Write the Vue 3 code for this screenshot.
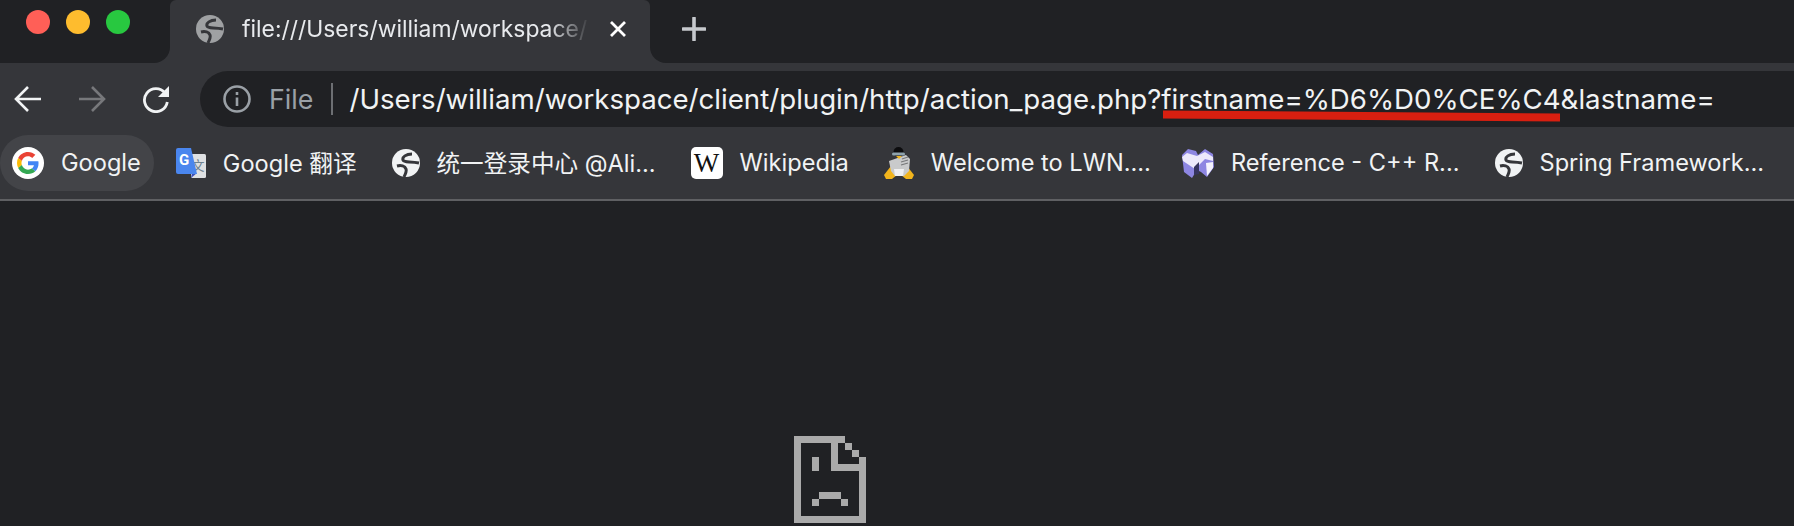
<template>
  <div class="browser">
    <div class="strip">
      <div class="lights">
        <span class="light red"></span>
        <span class="light amber"></span>
        <span class="light green"></span>
      </div>
      <div class="tab-slot">
        <div class="tab">
          <svg class="globe" viewBox="0 0 28 28">
            <circle cx="14" cy="14" r="14" fill="#9fa1a3" />
            <path d="M20 5C14 5 10 8 11 11C12 14 18 12 27 14M5 17C9 16 13 17 14 20C15 23 13 25 12 28" fill="none" stroke="#35363a" stroke-width="3" />
          </svg>
          <div class="tab-title">file:///Users/william/workspace/</div>
          <svg class="tab-close" viewBox="0 0 16 16">
            <path d="M1 1L15 15M15 1L1 15" stroke="#fff" stroke-width="2.800" />
          </svg>
        </div>
      </div>
      <div class="strip-rest">
        <svg class="new-tab" viewBox="0 0 24 24">
          <path d="M12 1V23M1 12H23" stroke="#c6c9cd" stroke-width="3.600" stroke-linecap="round" />
        </svg>
      </div>
    </div>

    <div class="toolbar">
      <svg class="nav" viewBox="0 0 28 28">
        <path d="M27 14H3M14 2L2 14L14 26" fill="none" stroke="#f1f3f4" stroke-width="2.600" />
      </svg>
      <svg class="nav" viewBox="0 0 28 28">
        <path d="M1 14H25M14 2L26 14L14 26" fill="none" stroke="#77787b" stroke-width="2.600" />
      </svg>
      <svg class="nav" viewBox="0 0 28 28">
        <path d="M23 8A11.500 11.500 0 1 0 25.300 17" fill="none" stroke="#f1f3f4" stroke-width="2.800" />
        <path d="M27 1V12H16Z" fill="#f1f3f4" />
      </svg>
      <div class="omnibox">
        <svg class="info" viewBox="0 0 28 28">
          <circle cx="14" cy="14" r="12.500" fill="none" stroke="#9aa0a6" stroke-width="2.600" />
          <path d="M14 12.500V21M14 7V10" stroke="#9aa0a6" stroke-width="2.600" />
        </svg>
        <span class="scheme">File</span>
        <span class="divider"></span>
        <span class="url">/Users/william/workspace/client/plugin/http/action_page.php?firstname=%D6%D0%CE%C4&amp;lastname=</span>
        <div class="scribble"></div>
      </div>
    </div>

    <div class="bookmarks">
      <div v-for="item in bookmarks" :key="item.label" class="bookmark" :class="{ hovered: item.icon === 'google' }">
        <span v-if="item.icon === 'google'" class="g-badge">
          <svg viewBox="0 0 48 48">
            <path fill="#EA4335" d="M24 9.500c3.540 0 6.710 1.220 9.210 3.600l6.850-6.850C35.900 2.380 30.470 0 24 0 14.620 0 6.510 5.380 2.560 13.220l7.980 6.190C12.430 13.720 17.740 9.500 24 9.500z" />
            <path fill="#4285F4" d="M46.980 24.550c0-1.570-.15-3.090-.38-4.550H24v9.020h12.940c-.58 2.960-2.260 5.480-4.780 7.180l7.730 6c4.510-4.180 7.090-10.360 7.090-17.650z" />
            <path fill="#FBBC05" d="M10.530 28.590c-.48-1.450-.76-2.990-.76-4.590s.27-3.140.76-4.590l-7.980-6.190C.92 16.460 0 20.120 0 24c0 3.880.92 7.540 2.560 10.780l7.970-6.190z" />
            <path fill="#34A853" d="M24 48c6.480 0 11.930-2.130 15.890-5.810l-7.730-6c-2.150 1.450-4.920 2.300-8.160 2.300-6.260 0-11.570-4.220-13.470-9.910l-7.980 6.190C6.510 42.620 14.620 48 24 48z" />
          </svg>
        </span>
        <svg v-else-if="item.icon === 'translate'" class="mark" viewBox="0 0 30 32">
          <rect x="15" y="7" width="15" height="24" rx="1.500" fill="#dfe1e3" />
          <text x="22" y="23" class="zi">文</text>
          <path d="M16 26L21 26L15 31Z" fill="#3b4fb8" />
          <path d="M2 1H15L21 27H2A2 2 0 0 1 0 25V3A2 2 0 0 1 2 1Z" fill="#4a86ee" />
          <text x="8" y="18" class="gee">G</text>
        </svg>
        <svg v-else-if="item.icon === 'globe'" class="globe" viewBox="0 0 28 28">
          <circle cx="14" cy="14" r="14" fill="#f1f3f4" />
          <path d="M20 5C14 5 10 8 11 11C12 14 18 12 27 14M5 17C9 16 13 17 14 20C15 23 13 25 12 28" fill="none" stroke="#35363a" stroke-width="3" />
        </svg>
        <span v-else-if="item.icon === 'wiki'" class="wiki">W</span>
        <svg v-else-if="item.icon === 'tux'" class="mark" viewBox="0 0 30 32">
          <path d="M0 28L7 19L13 28L8 32H2Z" fill="#f2b51d" />
          <path d="M30 28L23 19L17 28L22 32H28Z" fill="#f2b51d" />
          <path d="M5 14L22 8L26 12L25 24L20 29H11L7 24Z" fill="#c9cacb" />
          <path d="M10 22H20L19 29H11Z" fill="#f1f1f1" />
          <path d="M18 12L24 10M17 15L24 13M17 18L24 16" stroke="#77787a" stroke-width="1.200" />
          <circle cx="14.500" cy="5" r="5" fill="#0c0c0e" />
          <rect x="8" y="5.500" width="13" height="3" rx="1.500" fill="#8fa3ad" />
          <path d="M12 9H18L15 12Z" fill="#f2b51d" />
        </svg>
        <svg v-else-if="item.icon === 'cubes'" class="mark wide" viewBox="0 0 33 32">
          <path d="M1 8L7 2L15 4L17 8L24 2L32 7L33 20L26 30L20 25L16 23L11 31L3 25Z" fill="#8d86e2" />
          <path d="M1 10L6 6L16 9L24 5L32 10L32 14L24 12L14 22L2 14Z" fill="#ece9fb" />
          <path d="M13 20L18 15L18 27L13 28Z" fill="#36355f" />
          <path d="M25 16L32 15L32 21L26 29Z" fill="#f4f3fd" />
        </svg>
        <span class="label">{{ item.label }}</span>
      </div>
    </div>

    <div class="rule"></div>

    <div class="page">
      <svg class="sad" viewBox="72 48 216 261">
        <g fill="#aaa">
          <rect x="72" y="48" width="153" height="21" />
          <rect x="72" y="48" width="21" height="261" />
          <rect x="72" y="288" width="216" height="21" />
          <rect x="267" y="111" width="21" height="198" />
          <rect x="183" y="69" width="21" height="84" />
          <rect x="183" y="132" width="105" height="21" />
          <rect x="225" y="69" width="21" height="21" />
          <rect x="246" y="90" width="21" height="21" />
          <rect x="126" y="111" width="21" height="42" />
          <rect x="147" y="216" width="66" height="21" />
          <rect x="126" y="237" width="21" height="21" />
          <rect x="213" y="237" width="21" height="21" />
        </g>
      </svg>
    </div>
  </div>
</template>

<script setup>
const bookmarks = [
  { label: 'Google', icon: 'google' },
  { label: 'Google 翻译', icon: 'translate' },
  { label: '统一登录中心 @Ali...', icon: 'globe' },
  { label: 'Wikipedia', icon: 'wiki' },
  { label: 'Welcome to LWN....', icon: 'tux' },
  { label: 'Reference - C++ R...', icon: 'cubes' },
  { label: 'Spring Framework...', icon: 'globe' }
];
</script>

<style scoped>
.browser {
  height: 526px;
  display: flex;
  flex-direction: column;
  background: #202124;
  font-family: Inter, "Liberation Sans", "Noto Sans CJK SC", sans-serif;
  overflow: hidden;
}

.strip {
  display: flex;
  height: 63px;
  background: #35363a;
}

.lights {
  width: 170px;
  box-sizing: border-box;
  display: flex;
  gap: 16px;
  padding: 10px 0 0 26px;
  background: #202124;
  border-bottom-right-radius: 16px;
}

.light {
  width: 24px;
  height: 24px;
  border-radius: 50%;
}

.red { background: #ff5f57; }
.amber { background: #febc2e; }
.green { background: #28c840; }

.tab-slot {
  width: 480px;
  background: linear-gradient(#202124 8px, transparent 8px);
}

.tab {
  height: 100%;
  box-sizing: border-box;
  display: flex;
  align-items: center;
  padding: 0 0 5px 26px;
  background: #35363a;
  border-radius: 6px 6px 0 0;
}

.globe {
  width: 28px;
  height: 28px;
  flex: none;
}

.tab-title {
  width: 348px;
  margin-left: 18px;
  white-space: nowrap;
  color: #e8eaed;
  font-size: 22.900px;
  -webkit-mask-image: linear-gradient(to right, #000 88%, transparent 100%);
  mask-image: linear-gradient(to right, #000 88%, transparent 100%);
}

.tab-close {
  width: 16px;
  height: 16px;
  margin-left: 20px;
  flex: none;
}

.strip-rest {
  flex: 1;
  display: flex;
  align-items: center;
  padding: 0 0 5px 32px;
  background: #202124;
  border-bottom-left-radius: 16px;
}

.new-tab {
  width: 24px;
  height: 24px;
}

.toolbar {
  display: flex;
  align-items: center;
  gap: 36px;
  height: 72px;
  padding-left: 14px;
  background: #35363a;
}

.nav {
  width: 28px;
  height: 28px;
  flex: none;
}

.omnibox {
  position: relative;
  flex: 1;
  height: 56px;
  margin-left: -6px;
  display: flex;
  align-items: center;
  padding-left: 23px;
  background: #202124;
  border-radius: 28px 0 0 28px;
}

.info {
  width: 28px;
  height: 28px;
  flex: none;
}

.scheme {
  margin-left: 18px;
  color: #9aa0a6;
  font-size: 26.800px;
}

.divider {
  width: 2px;
  height: 32px;
  margin: 0 16px 0 18px;
  background: #6d6f73;
}

.url {
  color: #f1f3f4;
  font-size: 27.650px;
  white-space: nowrap;
}

/* hand drawn red mark over the query string */
.scribble {
  position: absolute;
  left: 963px;
  top: 41px;
  width: 397px;
  height: 8px;
  background: #d81f10;
  transform: rotate(0.43deg);
}

.bookmarks {
  display: flex;
  gap: 10px;
  height: 64px;
  box-sizing: border-box;
  padding-bottom: 8px;
  background: #35363a;
}

.bookmark {
  display: flex;
  align-items: center;
  gap: 17px;
  padding: 0 13px 0 12px;
  border-radius: 28px;
}

.bookmark.hovered {
  background: #434448;
}

.g-badge {
  width: 32px;
  height: 32px;
  box-sizing: border-box;
  padding: 5px;
  background: #fff;
  border-radius: 50%;
  flex: none;
}

.g-badge svg {
  display: block;
}

.mark {
  width: 30px;
  height: 32px;
  flex: none;
}

.mark.wide {
  width: 33px;
  margin-left: -5px;
}

.zi {
  font-size: 13px;
  fill: #6f8390;
  text-anchor: middle;
  font-family: "Noto Sans CJK SC", sans-serif;
}

.gee {
  font-size: 15px;
  font-weight: 700;
  fill: #fff;
  text-anchor: middle;
  font-family: Roboto, sans-serif;
}

.wiki {
  width: 32px;
  height: 32px;
  flex: none;
  display: flex;
  align-items: center;
  justify-content: center;
  background: #fff;
  border-radius: 5px;
  color: #111;
  font-family: "Liberation Serif", serif;
  font-size: 27px;
}

.label {
  margin-top: -2px;
  color: #f1f3f4;
  font-size: 23.600px;
  white-space: nowrap;
}

.rule {
  height: 2px;
  background: #5f6063;
}

.page {
  flex: 1;
  padding: 235px 0 0 794px;
}

.sad {
  display: block;
  width: 72px;
  height: 87px;
}
</style>

<style>
html, body {
  background: #202124;
  overflow: hidden;
}
</style>
